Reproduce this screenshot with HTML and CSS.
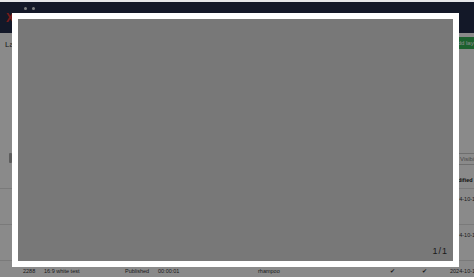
FILE: index.html
```html
<!DOCTYPE html>
<html>
<head>
<meta charset="utf-8">
<link rel="stylesheet" href="styles.css">
</head>
<body>
<div class="strip"></div>
<header class="header">
  <span class="logo">X</span>
  <span class="dots"><i></i><i></i></span>
</header>
<div class="toolbar">
  <span class="title">Layouts</span>
  <span class="btn">Add layout</span>
</div>
<div class="filters">
  <span class="input"></span>
  <span class="select">Visibility</span>
</div>
<div class="table">
  <div class="row head">
    <span>ID</span><span>Name</span><span>Status</span><span>Duration</span><span>Owner</span><span>Shared</span><span>Valid</span><span>Modified</span>
  </div>
  <div class="row">
    <span>2290</span><span>Menu board</span><span>Published</span><span>00:00:10</span><span>shampoo</span><span>✔</span><span>✔</span><span>2024-10-15</span>
  </div>
  <div class="row">
    <span>2289</span><span>Promo loop</span><span>Published</span><span>00:00:05</span><span>shampoo</span><span>✔</span><span>✔</span><span>2024-10-15</span>
  </div>
  <div class="row">
    <span>2288</span><span>16:9 white test</span><span>Published</span><span>00:00:01</span><span>rhampoo</span><span>✔</span><span>✔</span><span>2024-10-15</span>
  </div>
</div>

<div class="overlay">
  <div class="frame">
    <div class="image">
      <span class="counter">1/1</span>
    </div>
  </div>
</div>
</body>
</html>
```
FILE: styles.css
```css
html, body {
  margin: 0;
  padding: 0;
}
body {
  width: 474px;
  height: 277px;
  overflow: hidden;
  background: #fff;
  font-family: "Liberation Sans", Arial, sans-serif;
  color: #333;
}
.strip {
  height: 2px;
  background: #e6e7ea;
  position: relative;
  z-index: 20;
}
.header {
  height: 31px;
  background: #242d4a;
  display: flex;
  align-items: flex-start;
  padding-left: 6px;
  gap: 10px;
}
.logo {
  color: #e0322f;
  font-weight: bold;
  font-size: 12px;
  margin-top: 9px;
}
.dots {
  display: flex;
  gap: 5px;
  margin-top: 5px;
}
.dots i {
  width: 3px;
  height: 3px;
  border-radius: 50%;
  background: #e8ebf0;
}
.toolbar {
  height: 22px;
  display: flex;
  align-items: center;
  justify-content: space-between;
  padding-left: 5px;
  font-size: 7px;
  overflow: hidden;
}
.title {
  color: #333;
  font-size: 8px;
}
.btn {
  background: #36b357;
  color: #fff;
  font-size: 6px;
  height: 12px;
  line-height: 12px;
  padding: 0 4px;
  margin-right: -12px;
  margin-top: -3px;
  border-radius: 2px;
  white-space: nowrap;
}
.filters {
  margin-top: 98px;
  height: 12px;
  display: flex;
  justify-content: space-between;
  padding-left: 9px;
  overflow: hidden;
}
.input {
  width: 3px;
  height: 10px;
  background: #aaa;
  border-radius: 1px;
}
.select {
  font-size: 6px;
  color: #888;
  border: 1px solid #ccc;
  height: 10px;
  line-height: 10px;
  padding: 0 3px;
  margin-right: -12px;
  width: 22px;
  white-space: nowrap;
}
.table {
  margin-top: 5px;
  font-size: 5.5px;
  color: #333;
  overflow: hidden;
}
.row {
  display: grid;
  grid-template-columns: 21px 81px 33px 100px 132px 32px 28px 1fr;
  padding-left: 23px;
  height: 36px;
  align-items: start;
  padding-top: 7px;
  box-sizing: border-box;
  border-top: 1px solid #e2e2e2;
  white-space: nowrap;
  overflow: hidden;
}
.row.head {
  height: 18px;
  font-weight: bold;
  color: #222;
  border-top: none;
  padding-top: 7px;
}
.overlay {
  position: fixed;
  inset: 0;
  background: rgba(0, 0, 0, 0.46);
  display: flex;
  align-items: center;
  justify-content: center;
  z-index: 10;
}
.frame {
  background: #fff;
  padding: 6px;
  margin-left: -3px;
  margin-top: 3px;
}
.image {
  width: 435px;
  height: 242px;
  background: #787878;
  position: relative;
}
.counter {
  position: absolute;
  right: 5px;
  bottom: 5px;
  font-size: 9px;
  letter-spacing: 1px;
  color: #1a1a1a;
}
```
